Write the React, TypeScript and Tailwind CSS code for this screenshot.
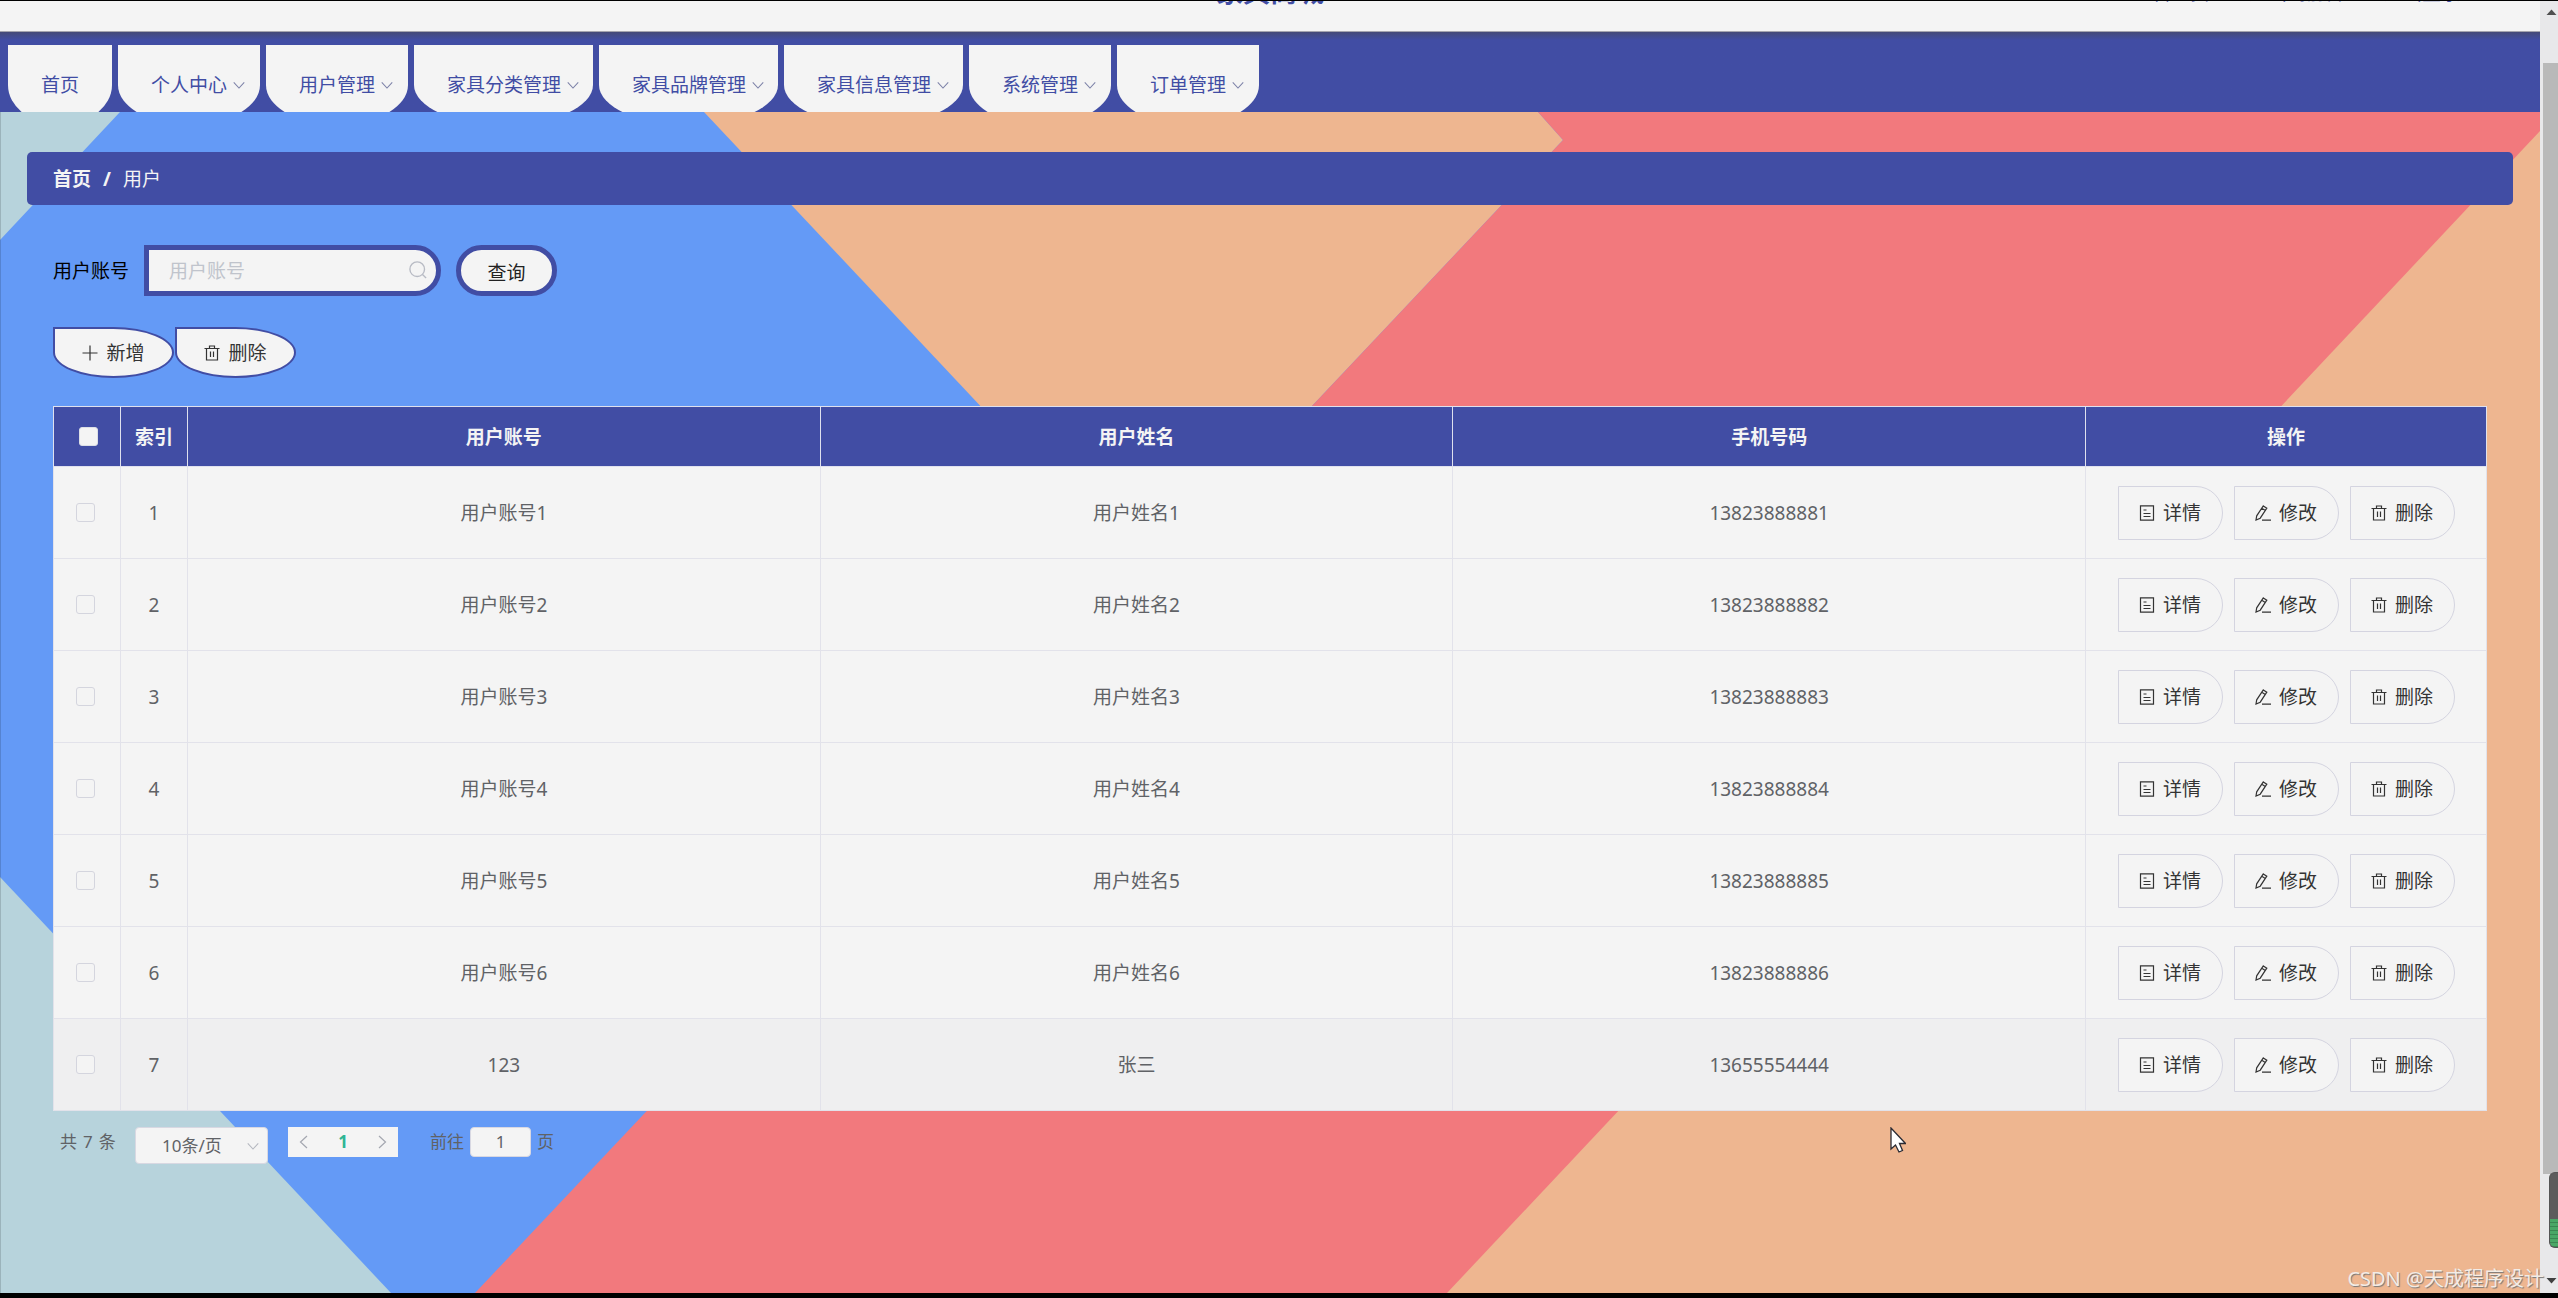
import type { ReactNode } from "react";
import clsx from "clsx";

const menus = [
  { label: "首页", width: "w-[104px]", arrow: false },
  { label: "个人中心", width: "w-[142px]", arrow: true },
  { label: "用户管理", width: "w-[142px]", arrow: true },
  { label: "家具分类管理", width: "w-[179px]", arrow: true },
  { label: "家具品牌管理", width: "w-[179px]", arrow: true },
  { label: "家具信息管理", width: "w-[179px]", arrow: true },
  { label: "系统管理", width: "w-[142px]", arrow: true },
  { label: "订单管理", width: "w-[142px]", arrow: true }
];

const users = [
  { account: "用户账号1", name: "用户姓名1", phone: "13823888881" },
  { account: "用户账号2", name: "用户姓名2", phone: "13823888882" },
  { account: "用户账号3", name: "用户姓名3", phone: "13823888883" },
  { account: "用户账号4", name: "用户姓名4", phone: "13823888884" },
  { account: "用户账号5", name: "用户姓名5", phone: "13823888885" },
  { account: "用户账号6", name: "用户姓名6", phone: "13823888886" },
  { account: "123", name: "张三", phone: "13655554444" }
];

type IconProps = { className?: string; children?: ReactNode };

const Icon = ({ className, children }: IconProps) => (
  <svg
    viewBox="0 0 16 16"
    fill="none"
    stroke="currentColor"
    strokeWidth="1.2"
    className={clsx("shrink-0", className)}
    aria-hidden="true"
  >
    {children}
  </svg>
);

const ArrowIcon = ({ className }: IconProps) => (
  <Icon className={className}>
    <path d="M2 5 8 11.500l6-6.500" />
  </Icon>
);

const PlusIcon = () => (
  <Icon className="size-4">
    <path d="M8 .5v15M.5 8h15" />
  </Icon>
);

const TrashIcon = () => (
  <Icon className="size-4">
    <path d="M.5 3.5h15M5.5 3.5V1h5v2.500M2.500 3.500v11.500h11V3.500M6.500 6.500v5.500M9.500 6.500v5.500" />
  </Icon>
);

const TicketIcon = () => (
  <Icon className="size-4">
    <path d="M1.500 .8h13v14.400h-13zM4.500 5h3M4.500 8.500h7M4.500 11.500h7" />
  </Icon>
);

const EditIcon = () => (
  <Icon className="size-4">
    <path d="M8.300 .9 11.800 3.200 5.200 13.200 1 15 1.700 10.800zM6.800 3.200l3.500 2.300M7 15.200h9" />
  </Icon>
);

const SearchIcon = ({ className }: IconProps) => (
  <Icon className={className}>
    <circle cx="7.3" cy="7.3" r="6.5" />
    <path d="m12 12 3.200 3.200" />
  </Icon>
);

const Backdrop = () => (
  <svg
    viewBox="0 0 2540 1181"
    preserveAspectRatio="none"
    className="absolute inset-0 size-full"
    aria-hidden="true"
  >
    <rect width="2540" height="1181" fill="#649af6" />
    <path d="M0 0h120L0 128z" fill="#b7d3dc" />
    <path d="M0 765 391 1181H0z" fill="#b7d3dc" />
    <path d="M704 0h834l25 28L1146 470z" fill="#eeb690" />
    <path d="M1538 0H2540V1181H475L1563 28z" fill="#f2797d" />
    <path d="M2540 19V1181H1447z" fill="#eeb690" />
    <path d="M0 0h1v1181H0z" fill="#000" fillOpacity="0.15" />
  </svg>
);

const Navigation = () => (
  <nav className="h-20 overflow-hidden bg-[#414da4] bg-linear-to-b from-[#454a78] to-[#414da4] to-10% pl-2 pt-[13px]">
    <ul className="flex gap-1.5">
      {menus.map((menu) => (
        <li key={menu.label}>
          <a
            href="#"
            className={clsx(
              "flex h-20 items-center gap-[5px] whitespace-nowrap rounded-b-[50%] bg-[#f4f4f4] pl-[33px] text-[#414da4]",
              menu.width
            )}
          >
            {menu.label}
            {menu.arrow && <ArrowIcon className="size-[14px] text-[#7d82a8]" />}
          </a>
        </li>
      ))}
    </ul>
  </nav>
);

const RowButton = ({ icon, label }: { icon: ReactNode; label: string }) => (
  <button
    type="button"
    className="flex h-[54px] w-[105px] items-center justify-center gap-2 rounded-r-[27px] border border-[#d4d4e0] bg-[#f4f4f4] text-[#333]"
  >
    {icon}
    {label}
  </button>
);

const UserTable = () => (
  <table className="mt-7 w-full table-fixed border-collapse text-center text-[#606266]">
    <colgroup>
      <col className="w-[67px]" />
      <col className="w-[67px]" />
      <col />
      <col />
      <col />
      <col className="w-[401px]" />
    </colgroup>
    <thead>
      <tr className="h-[60px] bg-[#414da4] text-[#f4f4f4]">
        <th className="border border-[#dfe1ee] pl-[3px]">
          <input
            type="checkbox"
            aria-label="全选"
            className="mx-auto block size-[19px] appearance-none rounded-[3px] border border-[#dcdfe6] bg-[#f4f4f4]"
          />
        </th>
        <th className="border border-[#dfe1ee] font-bold">索引</th>
        <th className="border border-[#dfe1ee] font-bold">用户账号</th>
        <th className="border border-[#dfe1ee] font-bold">用户姓名</th>
        <th className="border border-[#dfe1ee] font-bold">手机号码</th>
        <th className="border border-[#dfe1ee] font-bold">操作</th>
      </tr>
    </thead>
    <tbody>
      {users.map((user, index) => (
        <tr
          key={user.phone}
          className={clsx("h-[92px]", index === users.length - 1 ? "bg-[#efeff0]" : "bg-[#f4f4f4]")}
        >
          <td className="border border-[#e2e2ea] pr-1">
            <input
              type="checkbox"
              aria-label={user.account}
              className="mx-auto block size-[19px] appearance-none rounded-[3px] border border-[#d4d5de] bg-[#f4f4f4]"
            />
          </td>
          <td className="border border-[#e2e2ea]">{index + 1}</td>
          <td className="border border-[#e2e2ea]">{user.account}</td>
          <td className="border border-[#e2e2ea]">{user.name}</td>
          <td className="border border-[#e2e2ea]">{user.phone}</td>
          <td className="border border-[#e2e2ea]">
            <div className="flex justify-center gap-[11px]">
              <RowButton icon={<TicketIcon />} label="详情" />
              <RowButton icon={<EditIcon />} label="修改" />
              <RowButton icon={<TrashIcon />} label="删除" />
            </div>
          </td>
        </tr>
      ))}
    </tbody>
  </table>
);

const Pagination = () => (
  <div className="mt-4 flex items-start pl-[7px] text-[17px] leading-[30px] text-[#606266]">
    <span className="flex w-[75px] gap-[6px]">
      <span>共</span>
      <span>7</span>
      <span>条</span>
    </span>
    <div className="relative">
      <select
        aria-label="每页条数"
        className="h-[37px] w-[133px] appearance-none rounded-sm border border-[#d8d8e2] bg-[#f4f4f4] pl-[26px] text-[17px] leading-[30px] text-[#606266]"
      >
        <option>10条/页</option>
      </select>
      <ArrowIcon className="pointer-events-none absolute right-2 top-3 size-[14px] text-[#b4b7bf]" />
    </div>
    <div className="ml-5 flex h-[30px] w-[110px] items-center justify-between bg-[#f4f4f4] px-2">
      <button type="button" aria-label="上一页" className="text-[#a4a7b0]">
        <ArrowIcon className="size-4 rotate-90" />
      </button>
      <button type="button" className="font-bold text-[#2fb594]">
        1
      </button>
      <button type="button" aria-label="下一页" className="text-[#a4a7b0]">
        <ArrowIcon className="size-4 -rotate-90" />
      </button>
    </div>
    <label className="ml-8 flex items-center gap-[6px]">
      前往
      <input
        type="text"
        defaultValue="1"
        className="h-[30px] w-[61px] rounded-sm border border-[#d8d8e2] bg-[#f4f4f4] text-center text-[#606266]"
      />
      页
    </label>
  </div>
);

const ScrollBar = () => (
  <div className="relative flex w-[18px] shrink-0 flex-col items-end bg-[#e8e8ea]" aria-hidden="true">
    <svg viewBox="0 0 18 62" className="h-[62px] w-[18px]">
      <path d="M6.500 14 11.500 8.500 16.500 14z" fill="#505050" />
    </svg>
    <div className="w-[15px] flex-1 bg-[#b9b9b9]" />
    <svg viewBox="0 0 18 119" className="h-[119px] w-[18px]">
      <path d="M6.500 104h10l-5 5.500z" fill="#404040" />
    </svg>
    <div className="absolute bottom-[45px] right-0 flex h-[76px] w-[9px] flex-col justify-end overflow-hidden rounded-l-md border border-r-0 border-[#555] bg-[#5c5c5c]">
      <div className="h-7 bg-[repeating-linear-gradient(to_bottom,#4aa766_0px,#4aa766_3px,#3b8652_3px,#3b8652_4px)]" />
    </div>
  </div>
);

const App = () => {
  return (
    <div className="relative flex min-h-screen overflow-hidden border-b-[5px] border-t border-black font-['Noto_Sans','Noto_Sans_CJK_SC',sans-serif] text-[19px] leading-[28px]">
      <div className="flex min-w-0 flex-1 flex-col">
        <header className="flex h-[31px] items-start overflow-hidden border-b border-[#a5a5ae] bg-[#f4f4f4] px-20 text-[#414da4]">
          <div className="flex-1" />
          <h1 className="-mt-[27px] text-[27px] font-bold leading-9">家具商城</h1>
          <div className="-mt-[22px] flex flex-1 justify-end gap-10">
            <span>管理员</span>
            <a href="#">退出到前台</a>
            <a href="#">退出登录</a>
          </div>
        </header>
        <Navigation />
        <main className="relative flex-1">
          <Backdrop />
          <div className="relative px-[27px] pt-10">
            <div className="flex h-[53px] items-center gap-3 rounded-[5px] bg-[#414da4] pl-[26px] text-[#f4f4f4]">
              <a href="#" className="font-bold">
                首页
              </a>
              <span className="font-bold">/</span>
              <span>用户</span>
            </div>
            <div className="px-[26px] pt-10">
              <form className="flex items-center">
                <label htmlFor="account" className="w-[91px] text-black">
                  用户账号
                </label>
                <div className="relative">
                  <input
                    id="account"
                    type="text"
                    placeholder="用户账号"
                    className="block h-[51px] w-[297px] rounded-r-[27px] border-5 border-[#414da4] bg-[#f4f4f4] pl-5 placeholder:text-[#c0c4cc]"
                  />
                  <SearchIcon className="absolute right-[14px] top-4 size-[18px] text-[#b8bbc4]" />
                </div>
                <button
                  type="button"
                  className="ml-[15px] h-[51px] w-[101px] rounded-[27px] border-5 border-[#414da4] bg-[#f4f4f4] pt-1 text-[#222]"
                >
                  查询
                </button>
              </form>
              <div className="mt-[31px] flex gap-px">
                <button
                  type="button"
                  className="flex h-[51px] w-[121px] items-center justify-center gap-2 rounded-[50%] rounded-tl-none border-2 border-[#414da4] bg-[#f4f4f4] text-[#333]"
                >
                  <PlusIcon />
                  新增
                </button>
                <button
                  type="button"
                  className="flex h-[51px] w-[121px] items-center justify-center gap-2 rounded-[50%] rounded-tl-none border-2 border-[#414da4] bg-[#f4f4f4] text-[#333]"
                >
                  <TrashIcon />
                  删除
                </button>
              </div>
              <UserTable />
              <Pagination />
            </div>
          </div>
        </main>
      </div>
      <ScrollBar />
      <svg viewBox="0 0 16 26" className="absolute left-[1890px] top-[1126px] h-[26px] w-4" aria-hidden="true">
        <path
          d="M1 1v21l4.500-4 3.500 7 3.500-1.500-3-7h6z"
          fill="#fff"
          stroke="#2b2b33"
          strokeWidth="1.300"
        />
      </svg>
      <p className="absolute bottom-0 right-[14px] text-[20px] leading-[28px] text-[#f3ece6] [text-shadow:1px_1px_1px_#777]">
        CSDN @天成程序设计
      </p>
    </div>
  );
};

export default App;
